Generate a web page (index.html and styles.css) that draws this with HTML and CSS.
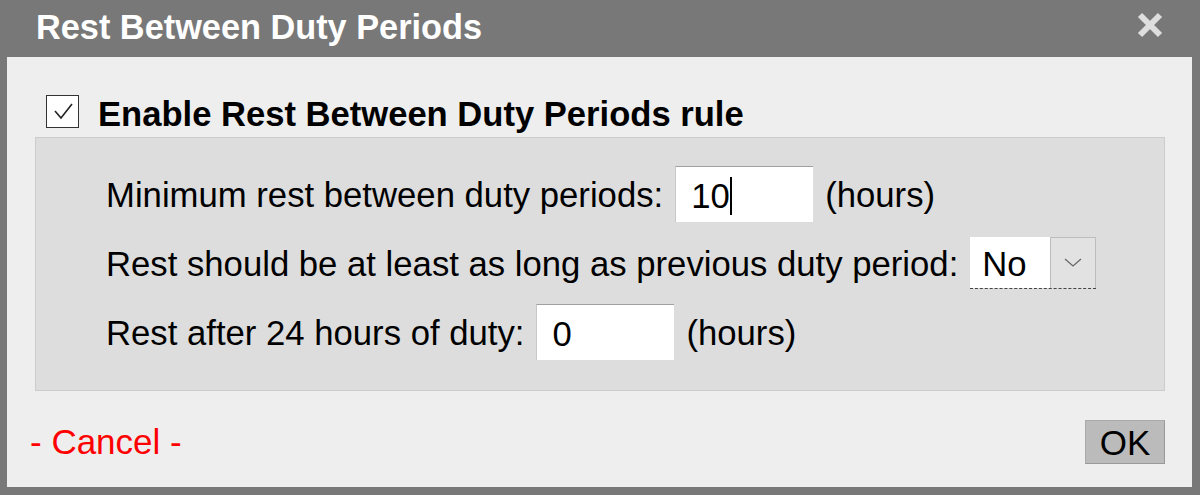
FILE: index.html
```html
<!DOCTYPE html>
<html lang="en">

<head>
    <meta charset="UTF-8">
    <meta name="viewport" content="width=device-width, initial-scale=1.0">
    <title>Rest Between Duty Periods</title>
    <link rel="stylesheet" href="styles.css">
</head>

<body>
    <div class="dialog">
        <header class="titlebar">
            <h1>Rest Between Duty Periods</h1>
            <span class="close">
                <svg width="30" height="26" viewBox="0 0 30 26">
                    <path d="M5 3 L25 23 M25 3 L5 23" stroke="#dedede" stroke-width="6" stroke-linecap="butt"/>
                </svg>
            </span>
        </header>

        <main class="content">
            <label class="enable">
                <span class="checkbox">
                    <svg width="24" height="24" viewBox="0 0 24 24">
                        <path d="M4 12 L10 19 L21 5" fill="none" stroke="#222" stroke-width="1.6"/>
                    </svg>
                </span>
                <span class="enable-text">Enable Rest Between Duty Periods rule</span>
            </label>

            <section class="rules">
                <div class="row">
                    <span class="text">Minimum rest between duty periods:</span>
                    <div class="field">10<span class="caret"></span></div>
                    <span class="text">(hours)</span>
                </div>
                <div class="row">
                    <span class="text">Rest should be at least as long as previous duty period:</span>
                    <div class="select">
                        <span class="select-value">No</span>
                        <span class="select-arrow">
                            <svg width="18" height="10" viewBox="0 0 18 10">
                                <path d="M1 1 L9 8 L17 1" fill="none" stroke="#666" stroke-width="1.2"/>
                            </svg>
                        </span>
                    </div>
                </div>
                <div class="row">
                    <span class="text">Rest after 24 hours of duty:</span>
                    <div class="field">0</div>
                    <span class="text">(hours)</span>
                </div>
            </section>

            <footer class="actions">
                <a class="cancel">- Cancel -</a>
                <button class="ok">OK</button>
            </footer>
        </main>
    </div>
</body>

</html>
```

FILE: styles.css
```css
body {
    margin: 0;
    padding: 0;
    font-family: 'Liberation Sans', Arial, sans-serif;
    color: #000;
}

.dialog {
    height: 495px;
    box-sizing: border-box;
    background: #787878;
    padding: 0 8px 8px 7px;
    display: flex;
    flex-direction: column;
}

.titlebar {
    height: 57px;
    display: flex;
    align-items: center;
    justify-content: space-between;
    padding: 0 27px 0 29px;
}

.titlebar h1 {
    margin: 0;
    font-size: 34.3px;
    font-weight: bold;
    color: #ffffff;
    padding-bottom: 2px;
}

.close {
    display: flex;
    padding-bottom: 8px;
}

.content {
    flex: 1;
    background: #eeeeee;
    display: flex;
    flex-direction: column;
    padding: 37px 27px 0 28px;
}

.enable {
    display: flex;
    align-items: center;
    gap: 19px;
    font-size: 34.6px;
    font-weight: bold;
    margin-left: 11px;
    height: 34px;
}

.enable-text {
    padding-top: 6px;
}

.checkbox {
    width: 33px;
    height: 33px;
    box-sizing: border-box;
    border: 1px solid #333;
    background: #fff;
    display: flex;
    align-items: center;
    justify-content: center;
}

.rules {
    margin-top: 9px;
    background: #dddddd;
    border: 1px solid #cccccc;
    padding: 28px 0 31px 70px;
    display: flex;
    flex-direction: column;
    gap: 14px;
    font-size: 34.7px;
}

.row {
    display: flex;
    align-items: center;
    gap: 12px;
    height: 55px;
}

.row .text {
    padding-top: 4px;
}

.field {
    width: 138px;
    height: 56px;
    box-sizing: border-box;
    background: #fff;
    border-top: 1px solid #a0a0a0;
    border-left: 1px solid #c8c8c8;
    padding: 4px 0 0 15px;
    display: flex;
    align-items: center;
}

.caret {
    display: inline-block;
    width: 2px;
    height: 38px;
    background: #000;
}

.select {
    display: flex;
    height: 51px;
    border-bottom: 1px dashed #444;
}

.select-value {
    width: 80px;
    background: #fff;
    padding: 4px 0 0 12px;
    box-sizing: border-box;
    display: flex;
    align-items: center;
}

.select-arrow {
    width: 46px;
    box-sizing: border-box;
    background: #e2e2e2;
    border: 1px solid #bdbdbd;
    border-bottom: none;
    display: flex;
    align-items: center;
    justify-content: center;
}

.actions {
    display: flex;
    justify-content: space-between;
    align-items: center;
    margin-top: 29px;
}

.cancel {
    color: #ff0000;
    font-size: 35px;
    margin-left: -5px;
    cursor: pointer;
}

.ok {
    width: 80px;
    height: 44px;
    background: #bbbbbb;
    border: 1px solid #aaa;
    border-right-color: #999;
    border-bottom-color: #999;
    font-family: 'Liberation Sans', Arial, sans-serif;
    font-size: 35px;
    line-height: 1;
    padding: 0;
}
```
